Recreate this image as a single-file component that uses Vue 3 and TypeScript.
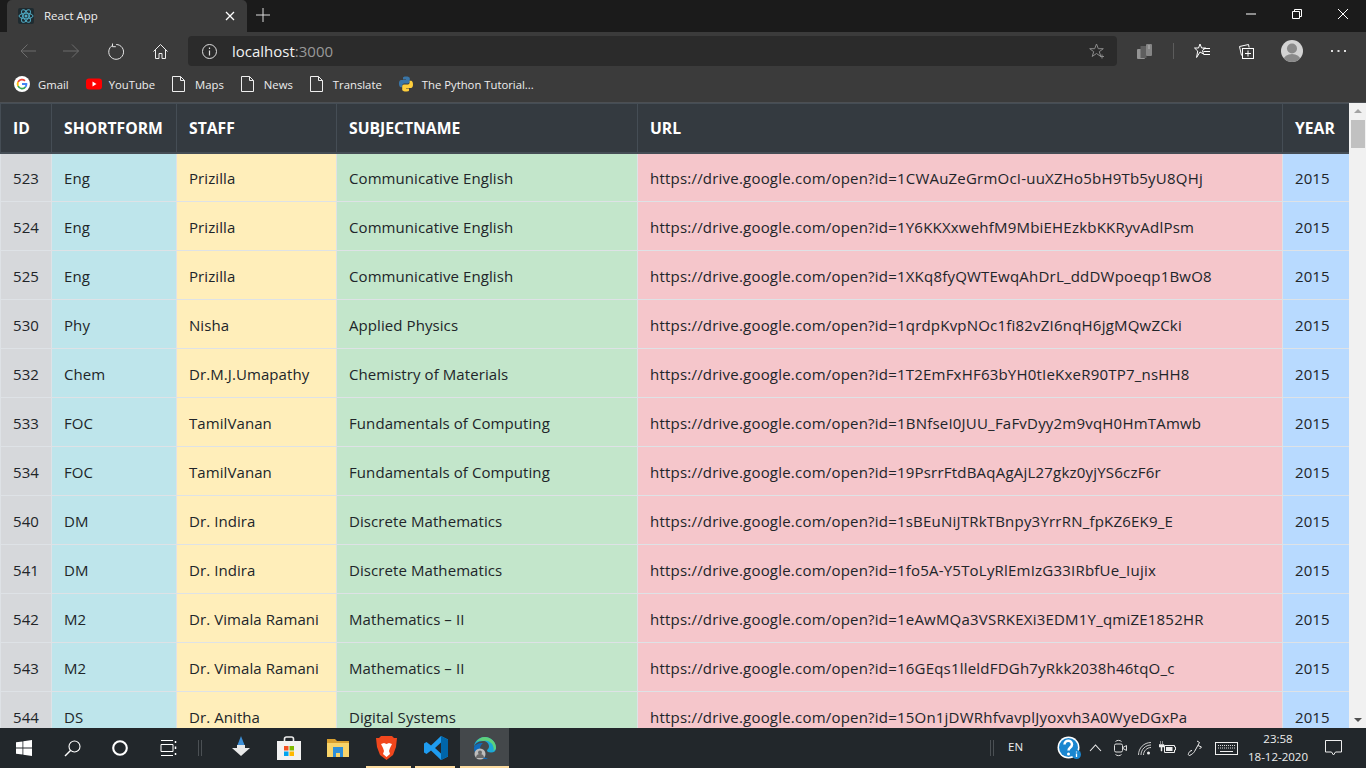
<script setup lang="ts">
interface Row { id: number; short: string; staff: string; subject: string; url: string }
const base = 'https://drive.google.com/open?id='
const rows: Row[] = [
  { id: 523, short: 'Eng', staff: 'Prizilla', subject: 'Communicative English', url: '1CWAuZeGrmOcI-uuXZHo5bH9Tb5yU8QHj' },
  { id: 524, short: 'Eng', staff: 'Prizilla', subject: 'Communicative English', url: '1Y6KKXxwehfM9MbiEHEzkbKKRyvAdlPsm' },
  { id: 525, short: 'Eng', staff: 'Prizilla', subject: 'Communicative English', url: '1XKq8fyQWTEwqAhDrL_ddDWpoeqp1BwO8' },
  { id: 530, short: 'Phy', staff: 'Nisha', subject: 'Applied Physics', url: '1qrdpKvpNOc1fi82vZI6nqH6jgMQwZCki' },
  { id: 532, short: 'Chem', staff: 'Dr.M.J.Umapathy', subject: 'Chemistry of Materials', url: '1T2EmFxHF63bYH0tIeKxeR90TP7_nsHH8' },
  { id: 533, short: 'FOC', staff: 'TamilVanan', subject: 'Fundamentals of Computing', url: '1BNfseI0JUU_FaFvDyy2m9vqH0HmTAmwb' },
  { id: 534, short: 'FOC', staff: 'TamilVanan', subject: 'Fundamentals of Computing', url: '19PsrrFtdBAqAgAjL27gkz0yjYS6czF6r' },
  { id: 540, short: 'DM', staff: 'Dr. Indira', subject: 'Discrete Mathematics', url: '1sBEuNiJTRkTBnpy3YrrRN_fpKZ6EK9_E' },
  { id: 541, short: 'DM', staff: 'Dr. Indira', subject: 'Discrete Mathematics', url: '1fo5A-Y5ToLyRlEmIzG33IRbfUe_Iujix' },
  { id: 542, short: 'M2', staff: 'Dr. Vimala Ramani', subject: 'Mathematics – II', url: '1eAwMQa3VSRKEXi3EDM1Y_qmiZE1852HR' },
  { id: 543, short: 'M2', staff: 'Dr. Vimala Ramani', subject: 'Mathematics – II', url: '16GEqs1lleldFDGh7yRkk2038h46tqO_c' },
  { id: 544, short: 'DS', staff: 'Dr. Anitha', subject: 'Digital Systems', url: '15On1jDWRhfvavplJyoxvh3A0WyeDGxPa' }
]
</script>

<template>
  <div class="screen">
    <header class="chrome">
      <div class="tabstrip">
        <div class="tab">
          <svg class="favicon" width="16" height="16" viewBox="0 0 16 16"><rect width="16" height="16" rx="2" fill="#1f2b30"/><g fill="none" stroke="#4fa9c2" stroke-width="1"><ellipse cx="8" cy="8" rx="7" ry="2.800"/><ellipse cx="8" cy="8" rx="7" ry="2.800" transform="rotate(60 8 8)"/><ellipse cx="8" cy="8" rx="7" ry="2.800" transform="rotate(120 8 8)"/></g><circle cx="8" cy="8" r="1.500" fill="#4fa9c2"/></svg>
          <span class="tab-title">React App</span>
          <svg class="tab-x" width="10" height="10" viewBox="0 0 10 10"><path d="M1 1l8 8M9 1l-8 8" stroke="#fff" stroke-width="1.300"/></svg>
        </div>
        <svg class="plus" width="14" height="14" viewBox="0 0 14 14"><path d="M7 0v14M0 7h14" stroke="#ddd" stroke-width="1"/></svg>
        <div class="win">
          <svg width="10" height="10" viewBox="0 0 10 10"><path d="M0 5h10" stroke="#fff"/></svg>
          <svg width="10" height="10" viewBox="0 0 10 10"><path d="M.5 2.500h7v7h-7zM2.500 2.500V.5h7v7h-2" fill="none" stroke="#fff"/></svg>
          <svg width="10" height="10" viewBox="0 0 10 10"><path d="M0 0l10 10M10 0L0 10" stroke="#fff"/></svg>
        </div>
      </div>
      <div class="toolbar">
        <svg class="nav n1" width="16" height="14" viewBox="0 0 16 14"><path d="M16 7H1M7.500 .5L1 7l6.500 6.500" fill="none" stroke="#6d6d6d" stroke-width="1"/></svg>
        <svg class="nav n2" width="17" height="14" viewBox="0 0 17 14"><path d="M0 7h15.500M9 .5L15.500 7 9 13.500" fill="none" stroke="#6d6d6d" stroke-width="1"/></svg>
        <svg class="nav n3" width="16" height="17" viewBox="0 0 16 17"><path d="M4.800 2.300a7.400 7.400 0 1 0 3.400-.8M4.500 .5V3.700h3.300" fill="none" stroke="#e6e6e6" stroke-width="1"/></svg>
        <svg class="nav n4" width="15" height="15" viewBox="0 0 15 15"><path d="M.5 7.500l7-7 7 7M2.500 6v8.500h3.500v-5h3v5h3.500V6" fill="none" stroke="#eee" stroke-width="1"/></svg>
        <div class="omnibox">
          <svg class="o-info" width="15" height="15" viewBox="0 0 15 15"><circle cx="7.500" cy="7.500" r="7" fill="none" stroke="#ddd" stroke-width="1"/><path d="M7.500 6.500v5M7.500 3.500v1.500" stroke="#ddd" stroke-width="1.200"/></svg>
          <span class="address">localhost<span class="port">:3000</span></span>
          <svg class="fav-add" width="16" height="16" viewBox="0 0 16 16"><path d="M7.500 1l1.800 4.700h5l-4 3 1.500 4.800-4.300-3-4.300 3 1.500-4.800-4-3h5z" fill="none" stroke="#8a8a8a"/><path d="M13 11.500v4M11 13.500h4" stroke="#8a8a8a"/></svg>
        </div>
        <svg class="t1" width="15" height="15" viewBox="0 0 15 15"><rect x="0" y="5" width="8" height="10" rx="1" fill="#949494"/><rect x="3.500" y="2" width="6" height="12" fill="#5f5f5f"/><rect x="9" y="0" width="6" height="12" rx="1" fill="#858585"/><path d="M11 2h2M11 4h2" stroke="#b5b5b5"/></svg>
        <span class="sep"></span>
        <svg class="t2" width="16" height="16" viewBox="0 0 16 16"><path d="M6 1l1.600 4h3.900L8.400 7.500 9.500 11 6 9 2.600 14.500 3.700 8 .5 5h4z" fill="none" stroke="#fff" stroke-width="1"/><path d="M9.500 5.500h6.500M9.500 8.500h6.500M9.500 11.500h6.500" stroke="#fff"/></svg>
        <svg class="t3" width="15" height="15" viewBox="0 0 15 15"><path d="M2.500 11.500L.5 2.500 9.500.5l.6 3" fill="none" stroke="#fff"/><rect x="3.500" y="4.500" width="11" height="10" fill="#3b3b3b" stroke="#fff"/><path d="M9 6.500v6M6 9.500h6" stroke="#fff"/></svg>
        <svg class="avatar" width="22" height="22" viewBox="0 0 22 22"><defs><clipPath id="av"><circle cx="11" cy="11" r="11"/></clipPath></defs><circle cx="11" cy="11" r="11" fill="#d3d3d3"/><g clip-path="url(#av)" fill="#8a8a8a"><circle cx="11" cy="8.500" r="5"/><ellipse cx="11" cy="20" rx="8.500" ry="6"/></g></svg>
        <svg class="more" width="15" height="3" viewBox="0 0 15 3"><path d="M0 0h2v2H0zM6.500 0h2v2h-2zM13 0h2v2h-2z" fill="#ddd"/></svg>
      </div>
      <div class="bookmarks">
        <span class="bm">
          <svg width="16" height="16" viewBox="0 0 16 16"><circle cx="8" cy="8" r="8" fill="#fff"/><path d="M11 4.800A4.400 4.400 0 0 0 4.100 6" fill="none" stroke="#ea4335" stroke-width="1.800"/><path d="M4.100 10A4.400 4.400 0 0 1 4.100 6" fill="none" stroke="#fbbc05" stroke-width="1.800"/><path d="M4.100 10A4.400 4.400 0 0 0 11.500 11" fill="none" stroke="#34a853" stroke-width="1.800"/><path d="M8 8h4.400a4.400 4.400 0 0 1-1 3" fill="none" stroke="#4285f4" stroke-width="1.800"/></svg>
          Gmail
        </span>
        <span class="bm b-yt">
          <svg width="16" height="12" viewBox="0 0 16 12"><rect width="16" height="11" y=".5" rx="3" fill="#f00"/><path d="M6.500 3.500v5l4-2.500z" fill="#fff"/></svg>
          YouTube
        </span>
        <span class="bm b-page" v-for="n in ['Maps', 'News', 'Translate']" :key="n">
          <svg width="13" height="16" viewBox="0 0 13 16"><path d="M.5.500h8l4 4v11H.5zM8.500.500v4h4" fill="none" stroke="#eee"/></svg>
          {{ n }}
        </span>
        <span class="bm b-py">
          <svg width="16" height="16" viewBox="0 0 16 16"><path d="M7.800.5C4.800.5 5 1.800 5 1.800V3.600h3v.5H3.400S1 3.800 1 7.600s2.100 3.700 2.100 3.700h1.300V9.500s-.1-2.100 2-2.100h3.400s2 0 2-1.900V2.500S12.100.5 7.800.5z" fill="#3a76a8"/><path d="M7.800.5C4.800.5 5 1.800 5 1.800V3.600h3v.5H3.400S1 3.800 1 7.600s2.100 3.700 2.100 3.700h1.300V9.500s-.1-2.100 2-2.100h3.400s2 0 2-1.900V2.500S12.100.5 7.800.5z" fill="#ffcf3c" transform="rotate(180 8 8)"/></svg>
          The Python Tutorial...
        </span>
      </div>
    </header>

    <main class="page">
      <div class="viewport">
        <table class="grid">
          <colgroup>
            <col class="c-id" /><col class="c-short" /><col class="c-staff" /><col class="c-subject" /><col class="c-url" /><col class="c-year" />
          </colgroup>
          <thead>
            <tr>
              <th>ID</th><th>SHORTFORM</th><th>STAFF</th><th>SUBJECTNAME</th><th>URL</th><th>YEAR</th>
            </tr>
          </thead>
          <tbody>
            <tr v-for="r in rows" :key="r.id">
              <td class="secondary">{{ r.id }}</td>
              <td class="info">{{ r.short }}</td>
              <td class="warning">{{ r.staff }}</td>
              <td class="success">{{ r.subject }}</td>
              <td class="danger">{{ base + r.url }}</td>
              <td class="primary">2015</td>
            </tr>
          </tbody>
        </table>
      </div>
      <div class="scrollbar">
        <span class="arrow up"></span>
        <span class="thumb"></span>
        <span class="arrow down"></span>
      </div>
    </main>

    <footer class="taskbar">
      <div class="slot"><svg width="16" height="16" viewBox="0 0 16 16"><path d="M0 2.300l6.500-.9v6.200H0zM7.300 1.300L16 0v7.600H7.300zM0 8.400h6.500v6.200L0 13.700zM7.300 8.400H16V16l-8.700-1.200z" fill="#fff"/></svg></div>
      <div class="slot"><svg width="17" height="17" viewBox="0 0 17 17"><circle cx="10.500" cy="6.500" r="5.500" fill="none" stroke="#fff" stroke-width="1.100"/><path d="M6.500 10.500L1 16" stroke="#fff" stroke-width="1.500"/></svg></div>
      <div class="slot"><svg width="16" height="16" viewBox="0 0 16 16"><circle cx="8" cy="8" r="6.800" fill="none" stroke="#fff" stroke-width="2.100"/></svg></div>
      <div class="slot"><svg width="17" height="16" viewBox="0 0 17 16"><path d="M1 .5h12M1 15.500h12M1 4.500h12v7H1z" fill="none" stroke="#fff"/><path d="M15.500 1v2M15.500 6.500v2.500M15.500 13v2" stroke="#fff" stroke-width="1.500"/></svg></div>
      <div class="grip-slot"><span class="grip"></span></div>
      <div class="pin p-down"><svg width="18" height="20" viewBox="0 0 18 20"><path d="M9 0l3.500 9h-7z" fill="#3d8fd6"/><path d="M5 9h8v3h5l-9 8-9-8h5z" fill="#e9e9e9"/></svg></div>
      <div class="pin"><svg width="24" height="24" viewBox="0 0 24 24"><path d="M7.500 6V3a2 2 0 0 1 2-2h5a2 2 0 0 1 2 2v3" fill="none" stroke="#eee" stroke-width="1.600"/><rect y="5" width="24" height="19" fill="#f2f2f2"/><rect x="7" y="10" width="4.500" height="4.500" fill="#f25022"/><rect x="12.500" y="10" width="4.500" height="4.500" fill="#7fba00"/><rect x="7" y="15.500" width="4.500" height="4.500" fill="#00a4ef"/><rect x="12.500" y="15.500" width="4.500" height="4.500" fill="#ffb900"/></svg></div>
      <div class="pin"><svg width="22" height="18" viewBox="0 0 22 18"><path d="M0 0h8l2 2h12v16H0z" fill="#d9a02f"/><path d="M0 4h22v14H0z" fill="#f9d469"/><path d="M6 8h10v10h-3v-4H9v4H6z" fill="#2f8fd8"/></svg></div>
      <div class="pin run-brave"><svg width="21" height="24" viewBox="0 0 21 24"><path d="M5 0h11l2 2 3 0-1 9-3 8-6.500 5L4 19l-3-8-1-9 3 0z" fill="#f1471d"/><path d="M5 8l3-1 2.500 1L13 7l3 1-2 4-1 3 1 3-3.500 3L7 18l1-3-1-3z" fill="#fff"/></svg></div>
      <div class="pin run-code"><svg width="24" height="24" viewBox="0 0 24 24"><path d="M17 0l7 3.500v17L17 24 7 14.500 2.500 18 0 16.500v-9L2.500 6 7 9.500zM17 6.500l-6 5.500 6 5.500z" fill="#1f9cf0"/><path d="M17 0l7 3.500v17L17 24z" fill="#0065a9"/></svg></div>
      <div class="pin run-edge">
        <svg width="24" height="24" viewBox="0 0 24 24"><path d="M1 12C1 5 6 1 12 1s11 5 11 11c0 3-2 4.500-5 4.500-2.500 0-4-1-4-2 0-1 2-1.500 2-4C16 7 13 5 10 5 5 5 1 8 1 12z" fill="#1ba7d8"/><path d="M10 5c4-1 9 1 10 5 1 2 1 4 0 5 2-1 3-2 3-3C23 5 17 1 12 1 8 1 5 3 3 6c2-1 5-1.500 7-1z" fill="#5ed07b"/><path d="M1 12c0 6 5 11 11 11 1 0 2 0 3-.5C9 22 6 17 7 12c.4-2 1.500-4 3-5-5 0-9 2-9 5z" fill="#0f6cbd"/><circle cx="7" cy="18" r="5.500" fill="#bdbdbd"/><circle cx="7" cy="16.500" r="2" fill="#6a6a6a"/><path d="M3 22a4 4 0 0 1 8 0z" fill="#6a6a6a"/></svg>
      </div>
      <span class="grip g2"></span>
      <span class="lang">EN</span>
      <svg class="i-help" width="24" height="24" viewBox="0 0 24 24"><circle cx="11.500" cy="11.500" r="11" fill="#fff"/><circle cx="11.500" cy="11.500" r="9.500" fill="#1a86d0"/><path d="M7.500 8.500c0-5 7.500-5 7.500 0 0 3-3.500 3-3.500 6" fill="none" stroke="#fff" stroke-width="2.500"/><circle cx="11.500" cy="18" r="1.500" fill="#fff"/><circle cx="19.500" cy="18.500" r="4.500" fill="#1a86d0"/><path d="M19.500 17.500v3.500M19.500 15.500v1" stroke="#fff" stroke-width="1.300"/></svg>
      <svg class="i-chev" width="13" height="8" viewBox="0 0 13 8"><path d="M1 7l5.500-6L12 7" fill="none" stroke="#eee" stroke-width="1.100"/></svg>
      <svg class="i-meet" width="13" height="18" viewBox="0 0 13 18"><rect x=".5" y="5" width="8" height="8" rx="1.500" fill="none" stroke="#ddd"/><path d="M9 8.500l3.500-2v5l-3.500-2M1.500 2.500C3 1 6 1 7.500 2.500M1.500 15.500c1.500 1.500 4.500 1.500 6 0" fill="none" stroke="#ddd"/></svg>
      <svg class="i-wifi" width="13" height="13" viewBox="0 0 13 13"><path d="M.5 13C.5 6 6 .5 13 .5M3 13C3 7.500 7.500 3 13 3M5.500 13c0-4 3.500-7.500 7.500-7.500" fill="none" stroke="#ccc"/><circle cx="10.500" cy="11" r="1.500" fill="#eee"/></svg>
      <svg class="i-batt" width="17" height="14" viewBox="0 0 17 14"><path d="M5.500 4.500h10v1.500h1v3h-1v2.500h-10z" fill="none" stroke="#eee"/><rect x="7" y="6" width="6.500" height="4" fill="#eee"/><path d="M1.500 0v3M3.500 0v3M0 3.500h5V6H3v4H2V6H0z" fill="#eee" stroke="#eee" stroke-width=".5"/></svg>
      <svg class="i-pen" width="16" height="17" viewBox="0 0 16 17"><path d="M10 1l2.500 1.500-5 9c-1 1.500-2.500 3-5 4-1 0-1.500-1-1-2 1-2 2-3 3.500-3M11 5.500l3.500 1.500-2 2" fill="none" stroke="#eee"/></svg>
      <svg class="i-key" width="23" height="13" viewBox="0 0 23 13"><rect x=".5" y=".5" width="22" height="12" fill="none" stroke="#eee"/><path d="M3 3.500h17M3 6h17" stroke="#ddd" stroke-dasharray="1 1"/><path d="M5 9.500h13" stroke="#eee"/></svg>
      <div class="clock"><span>23:58</span><span>18-12-2020</span></div>
      <svg class="i-note" width="17" height="16" viewBox="0 0 17 16"><path d="M.5.500h16v11.500h-6l-2 3-2-3h-6z" fill="none" stroke="#eee"/></svg>
    </footer>
  </div>
</template>

<style>
html, body { margin: 0; padding: 0; overflow: hidden; }
</style>

<style scoped>
.screen {
  width: 1366px;
  height: 768px;
  display: flex;
  flex-direction: column;
  overflow: hidden;
  font-family: "Open Sans", "Noto Sans", sans-serif;
}
.chrome { height: 102px; background: #3b3b3b; flex: none; color: #eee; }
.tabstrip { height: 32px; background: #1b1b1b; display: flex; align-items: center; }
.tab {
  margin-left: 7px; width: 240px; height: 32px; box-sizing: border-box; background: #3b3b3b;
  border-radius: 5px 5px 0 0; display: flex; align-items: center; padding: 0 12px 0 11px;
}
.tab-title { margin: 0 0 2px 10px; font-size: 11.5px; color: #f0f0f0; flex: 1; }
.favicon { flex: none; }
.plus { margin: 0 0 2px 9px; }
.win { margin-left: auto; display: flex; gap: 36px; padding-right: 18px; margin-bottom: 4px; }
.win svg { display: block; }
.toolbar { height: 38px; display: flex; align-items: center; }
.nav { flex: none; }
.n1 { margin-left: 20px; }
.n2 { margin-left: 27px; }
.n3 { margin-left: 28px; }
.n4 { margin-left: 29px; }
.omnibox {
  margin-left: 20px; width: 929px; height: 30px; background: #2b2b2b; border-radius: 4px;
  display: flex; align-items: center; padding: 0 12px 0 14px; box-sizing: border-box;
}
.address { margin-left: 15px; font-size: 15px; color: #f2f2f2; flex: 1; }
.port { color: #999; }
.t1 { margin-left: 20px; flex: none; }
.sep { width: 1px; height: 16px; background: #5c5c5c; margin-left: 21px; flex: none; }
.t2 { margin-left: 20px; flex: none; }
.t3 { margin-left: 29px; flex: none; }
.avatar { margin-left: 27px; flex: none; }
.more { margin-left: 28px; flex: none; }
.bookmarks { height: 28px; display: flex; align-items: center; font-size: 11.3px; color: #eee; padding-left: 14px; }
.bm { display: flex; align-items: center; gap: 8px; margin-right: 17px; white-space: nowrap; line-height: 15px; }
.bm svg { margin-bottom: 1px; }
.b-yt { gap: 7px; }
.b-page { gap: 10px; }
.b-py { margin-left: -1px; }

.page { flex: 1; min-height: 0; display: flex; border-top: 1px solid #4c4f53; overflow: hidden; background: #fff; }
.viewport { flex: 1; min-width: 0; overflow: hidden; }
.grid {
  border-collapse: collapse; table-layout: fixed; width: 1349px; font-size: 15px; color: #212529;
}
.c-id { width: 51px; }
.c-short { width: 125px; }
.c-staff { width: 160px; }
.c-subject { width: 301px; }
.c-url { width: 645px; }
.c-year { width: 67px; }
th {
  height: 49px; box-sizing: border-box; background: #343a40; color: #fff; font-weight: 700; font-size: 15.7px; text-align: left;
  padding: 0 12px; border: 1px solid #454d55; border-bottom-width: 2px; white-space: nowrap;
}
td { height: 49px; box-sizing: border-box; padding: 2px 12px 0; border: 1px solid #dee2e6; white-space: nowrap; overflow: hidden; letter-spacing: .08px; }
.secondary { background: #d6d8db; }
.info { background: #bee5eb; }
.warning { background: #ffeeba; }
.success { background: #c3e6cb; }
.danger { background: #f5c6cb; letter-spacing: .21px; }
.primary { background: #b8daff; }

.scrollbar { width: 17px; flex: none; background: #f1f1f1; display: flex; flex-direction: column; align-items: center; }
.arrow { width: 0; height: 0; border-left: 4px solid transparent; border-right: 4px solid transparent; flex: none; }
.up { border-bottom: 4px solid #a3a3a3; margin-top: 6px; }
.thumb { width: 14px; height: 28px; background: #c1c1c1; margin-top: 7px; }
.down { border-top: 4px solid #505050; margin-top: auto; margin-bottom: 6px; }

.taskbar { height: 40px; flex: none; background: #22272b; display: flex; align-items: center; color: #eee; }
.slot { width: 48px; height: 40px; display: flex; align-items: center; justify-content: center; flex: none; }
.grip-slot { width: 23px; height: 40px; display: flex; align-items: center; flex: none; padding-left: 6px; box-sizing: border-box; }
.grip { width: 4px; height: 16px; box-sizing: border-box; border-left: 1px solid #4b5054; border-right: 1px solid #4b5054; flex: none; }
.pin { width: 49px; height: 40px; display: flex; align-items: center; justify-content: center; flex: none; position: relative; }
.p-down svg { margin: 0 0 5px 3px; }
.run-brave::after, .run-code::after, .run-edge::after { content: ""; position: absolute; bottom: 0; height: 2px; background: #fddca0; }
.run-brave::after { left: 4px; right: 0; }
.run-code::after { left: 4px; right: 5px; }
.run-edge { background: #44484b; }
.run-edge::after { left: 0; right: 0; }
.g2 { margin-left: 481px; }
.lang { font-size: 11.5px; margin-left: 14px; width: 14px; flex: none; margin-bottom: 4px; }
.taskbar > svg { flex: none; }
.i-help { margin-left: 35px; }
.i-chev { margin-left: 8px; }
.i-meet { margin-left: 12px; }
.i-wifi { margin-left: 11px; }
.i-batt { margin-left: 8px; }
.i-pen { margin-left: 11px; }
.i-key { margin-left: 12px; }
.clock { margin-left: 5px; width: 70px; flex: none; display: flex; flex-direction: column; align-items: center; font-size: 11.5px; line-height: 18px; white-space: nowrap; }
.i-note { margin-left: 12px; }
</style>
